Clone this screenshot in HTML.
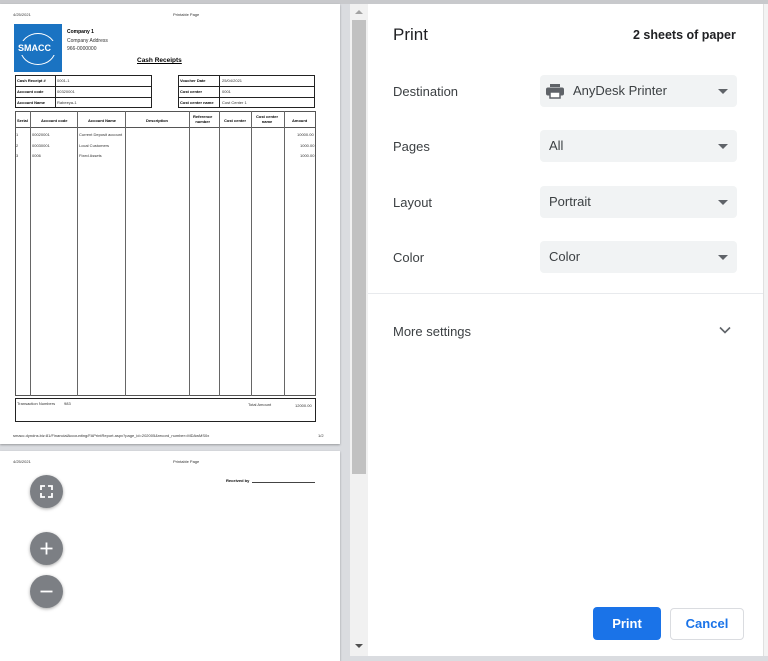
<!DOCTYPE html>
<html><head><meta charset="utf-8"><style>
*{margin:0;padding:0;box-sizing:border-box}
body{width:768px;height:656px;overflow:hidden;background:#dadce0;position:relative;font-family:"Liberation Sans",Arial,sans-serif}
.a{position:absolute}
.pg{background:#fff;position:absolute;left:0;width:340px;box-shadow:0 1px 2px rgba(0,0,0,.3)}
.t{position:absolute;font-size:4px;color:#333;white-space:nowrap}
.b{font-weight:bold;color:#000}
.ln{position:absolute;background:#222}
.lbl{position:absolute;left:393px;font-size:13px;color:#3c4043}
.sel{position:absolute;left:540px;width:197px;height:32px;background:#f1f3f4;border-radius:4px;font-size:13px;color:#3c4043;padding-left:9px;line-height:32px}
.sel:after{content:"";position:absolute;right:9px;top:14px;border-left:5px solid transparent;border-right:5px solid transparent;border-top:5px solid #5f6368}
.fab{position:absolute;left:30px;width:33px;height:33px;border-radius:50%;background:#7c7f84;box-shadow:0 1px 3px rgba(0,0,0,.35)}
</style></head><body>
<div class="a" style="left:0;top:0;width:768px;height:4px;background:#c8c9cc"></div>
<!-- page 1 -->
<div class="pg" style="top:4px;height:440px">
<div class="t" style="left:13px;top:8px">4/25/2021</div>
<div class="t" style="left:173px;top:8px">Printable Page</div>
<div class="a" style="left:14px;top:20px;width:48px;height:48px;background:#1a73c2"></div>
<div class="a" style="left:20px;top:29px;width:36px;height:32px;border:1.5px solid #fff;border-radius:50%"></div>
<div class="a" style="left:17px;top:37px;width:42px;height:14px;background:#1a73c2"></div>
<div class="a" style="left:18px;top:39px;font-size:9px;font-weight:bold;color:#fff">SMACC</div>
<div class="t b" style="left:67px;top:25px;font-size:5px">Company 1</div>
<div class="t" style="left:67px;top:34px;font-size:5px">Company Address</div>
<div class="t" style="left:67px;top:42px;font-size:5px">966-0000000</div>
<div class="t b" style="left:137px;top:53px;font-size:6.5px;text-decoration:underline">Cash Receipts</div>
<div class="a" style="left:15px;top:71px;width:137px;height:33px;border:1px solid #222"></div>
<div class="ln" style="left:15px;top:82px;width:137px;height:1px"></div>
<div class="ln" style="left:15px;top:93px;width:137px;height:1px"></div>
<div class="ln" style="left:55px;top:71px;width:1px;height:33px"></div>
<div class="t b" style="left:17px;top:74px">Cash Receipt #</div><div class="t" style="left:57px;top:74px">0001-1</div>
<div class="t b" style="left:17px;top:85px">Account code</div><div class="t" style="left:57px;top:85px">00320001</div>
<div class="t b" style="left:17px;top:96px">Account Name</div><div class="t" style="left:57px;top:96px">Rabeeya-1</div>
<div class="a" style="left:178px;top:71px;width:137px;height:33px;border:1px solid #222"></div>
<div class="ln" style="left:178px;top:82px;width:137px;height:1px"></div>
<div class="ln" style="left:178px;top:93px;width:137px;height:1px"></div>
<div class="ln" style="left:219px;top:71px;width:1px;height:33px"></div>
<div class="t b" style="left:180px;top:74px">Voucher Date</div><div class="t" style="left:222px;top:74px">25/04/2021</div>
<div class="t b" style="left:180px;top:85px">Cost center</div><div class="t" style="left:222px;top:85px">0001</div>
<div class="t b" style="left:180px;top:96px">Cost center name</div><div class="t" style="left:222px;top:96px">Cost Center 1</div>
<div class="a" style="left:15px;top:107px;width:301px;height:285px;border:1px solid #555"></div>
<div class="ln" style="left:15px;top:123px;width:301px;height:1px;background:#555"></div>
<div class="ln" style="left:30px;top:107px;width:1px;height:285px;background:#666"></div>
<div class="ln" style="left:77px;top:107px;width:1px;height:285px;background:#666"></div>
<div class="ln" style="left:125px;top:107px;width:1px;height:285px;background:#666"></div>
<div class="ln" style="left:189px;top:107px;width:1px;height:285px;background:#666"></div>
<div class="ln" style="left:219px;top:107px;width:1px;height:285px;background:#666"></div>
<div class="ln" style="left:251px;top:107px;width:1px;height:285px;background:#666"></div>
<div class="ln" style="left:284px;top:107px;width:1px;height:285px;background:#666"></div>
<div class="t b" style="left:17px;top:114px">Serial</div>
<div class="t b" style="left:41px;top:114px">Account code</div>
<div class="t b" style="left:88px;top:114px">Account Name</div>
<div class="t b" style="left:146px;top:114px">Description</div>
<div class="t b" style="left:193px;top:110px;text-align:center">Reference<br>number</div>
<div class="t b" style="left:224px;top:114px">Cost center</div>
<div class="t b" style="left:256px;top:110px;text-align:center">Cost center<br>name</div>
<div class="t b" style="left:292px;top:114px">Amount</div>
<div class="t" style="left:16px;top:128px">1</div><div class="t" style="left:32px;top:128px">00020001</div><div class="t" style="left:79px;top:128px">Current Deposit account</div><div class="t" style="left:297px;top:128px">10000.00</div>
<div class="t" style="left:16px;top:139px">2</div><div class="t" style="left:32px;top:139px">00030001</div><div class="t" style="left:79px;top:139px">Local Customers</div><div class="t" style="left:300px;top:139px">1000.00</div>
<div class="t" style="left:16px;top:149px">3</div><div class="t" style="left:32px;top:149px">0006</div><div class="t" style="left:79px;top:149px">Fixed Assets</div><div class="t" style="left:300px;top:149px">1000.00</div>
<div class="a" style="left:15px;top:394px;width:301px;height:24px;border:1px solid #222"></div>
<div class="t" style="left:17px;top:397px">Transaction Numbers</div><div class="t" style="left:64px;top:397px">983</div>
<div class="t" style="left:248px;top:398px">Total Amount</div><div class="t" style="left:295px;top:399px">12000.00</div>
<div class="t" style="left:13px;top:429px">smacc.dyndns.biz:81/FinancialAccounting/FAPrintReport.aspx?page_id=202005&amp;record_number=MDAwMS0x</div>
<div class="t" style="left:318px;top:429px">1/2</div>
</div>
<div class="pg" style="top:451px;height:210px">
<div class="t" style="left:13px;top:8px">4/25/2021</div>
<div class="t" style="left:173px;top:8px">Printable Page</div>
<div class="t b" style="left:226px;top:27px">Received by</div>
<div class="ln" style="left:252px;top:31px;width:63px;height:1px;background:#444"></div>
</div>
<div class="fab" style="top:475px"><svg width="33" height="33" viewBox="0 0 33 33" fill="none" stroke="#fff" stroke-width="1.8"><path d="M11 15v-4h4M18 11h4v4M22 18v4h-4M15 22h-4v-4"/></svg></div>
<div class="fab" style="top:532px"><svg width="33" height="33" viewBox="0 0 33 33" stroke="#fff" stroke-width="1.8"><path d="M16.5 10.5v12M10.5 16.5h12"/></svg></div>
<div class="fab" style="top:575px"><svg width="33" height="33" viewBox="0 0 33 33" stroke="#fff" stroke-width="1.8"><path d="M10.5 16.5h12"/></svg></div>
<div class="a" style="left:350px;top:4px;width:18px;height:652px;background:#f1f1f1"></div>
<div class="a" style="left:352px;top:20px;width:14px;height:454px;background:#c1c1c1"></div>
<div class="a" style="left:355px;top:10px;border-left:4px solid transparent;border-right:4px solid transparent;border-bottom:4px solid #a3a3a3"></div>
<div class="a" style="left:355px;top:644px;border-left:4px solid transparent;border-right:4px solid transparent;border-top:4px solid #505050"></div>
<div class="a" style="left:368px;top:4px;width:395px;height:652px;background:#fff"></div>
<div class="a" style="left:763px;top:4px;width:5px;height:652px;background:#f3f3f3;border-left:1px solid #e0e0e0"></div>
<div class="a" style="left:393px;top:25px;font-size:17px;color:#202124">Print</div>
<div class="a" style="left:633px;top:28px;font-size:12.5px;font-weight:bold;color:#202124">2 sheets of paper</div>
<div class="lbl" style="top:84px">Destination</div>
<div class="sel" style="top:75px;padding-left:33px">AnyDesk Printer
<svg class="a" style="left:6px;top:8px" width="18" height="16" viewBox="0 0 18 16"><path d="M4 1h10v3H4z" fill="#5f6368"/><rect x="0" y="4.5" width="18" height="8" rx="2" fill="#5f6368"/><rect x="4" y="9" width="10" height="6" fill="#fff" stroke="#5f6368" stroke-width="1.5"/></svg></div>
<div class="lbl" style="top:139px">Pages</div>
<div class="sel" style="top:130px">All</div>
<div class="lbl" style="top:195px">Layout</div>
<div class="sel" style="top:186px">Portrait</div>
<div class="lbl" style="top:250px">Color</div>
<div class="sel" style="top:241px">Color</div>
<div class="a" style="left:368px;top:293px;width:395px;height:1px;background:#e8eaed"></div>
<div class="lbl" style="top:324px">More settings</div>
<svg class="a" style="left:719px;top:326px" width="12" height="8" viewBox="0 0 12 8"><path d="M1 1.5l5 5 5-5" fill="none" stroke="#5f6368" stroke-width="1.6"/></svg>
<div class="a" style="left:593px;top:607px;width:68px;height:33px;background:#1a73e8;border-radius:4px;color:#fff;font-size:13px;font-weight:bold;text-align:center;line-height:33px">Print</div>
<div class="a" style="left:670px;top:608px;width:74px;height:32px;border:1px solid #dadce0;border-radius:4px;color:#1a73e8;font-size:13px;font-weight:bold;text-align:center;line-height:30px">Cancel</div>
</body></html>
